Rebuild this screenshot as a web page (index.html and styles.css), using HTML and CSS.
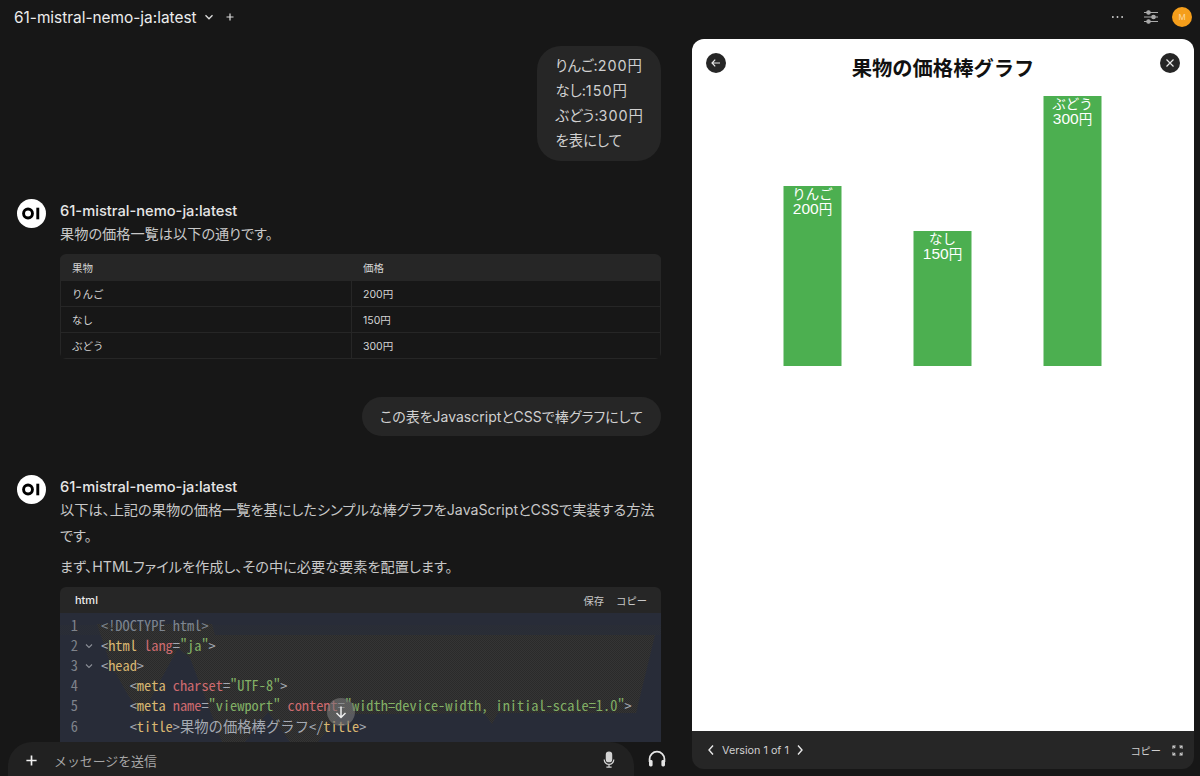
FILE: index.html
```html
<!DOCTYPE html>
<html lang="ja">
<head>
<meta charset="utf-8">
<title>61-mistral-nemo-ja:latest</title>
<link rel="stylesheet" href="styles.css">
</head>
<body>
<div class="app">
  <header class="topbar">
    <div class="model">
      <span class="model-name">61-mistral-nemo-ja:latest</span>
      <svg class="tb-chevron" viewBox="0 0 10 10"><path d="M1.500 3.200 5 6.800l3.500-3.600"/></svg>
      <svg class="tb-plus" viewBox="0 0 10 10"><path d="M5 1.500v7M1.500 5h7"/></svg>
    </div>
    <div class="tools">
      <svg class="tb-dots" viewBox="0 0 14 4"><circle cx="2" cy="2" r="1"/><circle cx="7" cy="2" r="1"/><circle cx="12" cy="2" r="1"/></svg>
      <svg class="tb-sliders" viewBox="0 0 16 14"><path d="M1 2.500h14M1 7h14M1 11.500h14"/><circle cx="5.500" cy="2.500" r="1.700"/><circle cx="10.500" cy="7" r="1.700"/><circle cx="5.500" cy="11.500" r="1.700"/></svg>
      <div class="user-avatar">M</div>
    </div>
  </header>
  <main class="main">
    <section class="chat">
      <div class="messages">
        <div class="user-row">
          <div class="bubble bubble-multi">
            <p>りんご:<span class="num">200</span>円</p>
            <p>なし:<span class="num">150</span>円</p>
            <p>ぶどう:<span class="num">300</span>円</p>
            <p>を表にして</p>
          </div>
        </div>
        <article class="reply reply-first">
          <svg class="logo" viewBox="0 0 30 30"><circle cx="15" cy="15" r="15" fill="#fff"/><circle cx="11.400" cy="15" r="4.600" fill="none" stroke="#000" stroke-width="3"/><rect x="20" y="9" width="3" height="12" fill="#000"/></svg>
          <div class="reply-body">
            <div class="name">61-mistral-nemo-ja:latest</div>
            <p class="text text-first">果物の価格一覧は以下の通りです。</p>
            <div class="table">
              <div class="tr th"><div class="td td-a">果物</div><div class="td td-b">価格</div></div>
              <div class="tr"><div class="td td-a">りんご</div><div class="td td-b">200円</div></div>
              <div class="tr"><div class="td td-a">なし</div><div class="td td-b">150円</div></div>
              <div class="tr"><div class="td td-a">ぶどう</div><div class="td td-b">300円</div></div>
            </div>
          </div>
        </article>
        <div class="user-row user-row-2">
          <div class="bubble bubble-single">この表をJavascriptとCSSで棒グラフにして</div>
        </div>
        <article class="reply reply-second">
          <svg class="logo" viewBox="0 0 30 30"><circle cx="15" cy="15" r="15" fill="#fff"/><circle cx="11.400" cy="15" r="4.600" fill="none" stroke="#000" stroke-width="3"/><rect x="20" y="9" width="3" height="12" fill="#000"/></svg>
          <div class="reply-body">
            <div class="name">61-mistral-nemo-ja:latest</div>
            <p class="text text-wrap">以下は、上記の果物の価格一覧を基にしたシンプルな棒グラフをJavaScriptとCSSで実装する方法です。</p>
            <p class="text text-p2">まず、HTMLファイルを作成し、その中に必要な要素を配置します。</p>
            <div class="code">
              <div class="code-head">
                <span class="lang">html</span>
                <span class="code-actions"><span>保存</span><span>コピー</span></span>
              </div>
              <div class="code-body">
                <svg class="dither" viewBox="0 0 601 129" width="601" height="129">
                  <defs>
                    <pattern id="dots" width="2" height="2" patternUnits="userSpaceOnUse">
                      <rect width="2" height="2" fill="#2a2a2a"/>
                      <rect width="1" height="1" fill="#353535" shape-rendering="crispEdges"/>
                      <rect x="1" y="1" width="1" height="1" fill="#353535" shape-rendering="crispEdges"/>
                    </pattern>
                  </defs>
                  <rect x="0" y="12" width="601" height="10" fill="url(#dots)" opacity=".2"/>
                  <polygon fill="url(#dots)" points="37,11 152,11 155,22 595,22 576,100 438,100 432,111 424,100 325,101 280,101 258,129 230,129 208,99 185,129 162,129 130,45 118,35 90,87 83,103 68,82 50,50"/>
                </svg>
                <div class="line"><span class="ln">1</span><span class="fold"></span><code class="src"><span class="dt">&lt;!DOCTYPE html&gt;</span></code></div>
                <div class="line"><span class="ln">2</span><span class="fold"><svg viewBox="0 0 8 6"><path d="M1 1.500 4 4.500l3-3"/></svg></span><code class="src"><span class="p">&lt;</span><span class="t">html</span> <span class="a">lang</span><span class="p">=</span><span class="s">"ja"</span><span class="p">&gt;</span></code></div>
                <div class="line"><span class="ln">3</span><span class="fold"><svg viewBox="0 0 8 6"><path d="M1 1.500 4 4.500l3-3"/></svg></span><code class="src"><span class="p">&lt;</span><span class="t">head</span><span class="p">&gt;</span></code></div>
                <div class="line"><span class="ln">4</span><span class="fold"></span><code class="src">    <span class="p">&lt;</span><span class="t">meta</span> <span class="a">charset</span><span class="p">=</span><span class="s">"UTF-8"</span><span class="p">&gt;</span></code></div>
                <div class="line"><span class="ln">5</span><span class="fold"></span><code class="src">    <span class="p">&lt;</span><span class="t">meta</span> <span class="a">name</span><span class="p">=</span><span class="s">"viewport"</span> <span class="a">content</span><span class="p">=</span><span class="s">"width=device-width, initial-scale=1.0"</span><span class="p">&gt;</span></code></div>
                <div class="line"><span class="ln">6</span><span class="fold"></span><code class="src">    <span class="p">&lt;</span><span class="t">title</span><span class="p">&gt;</span><span class="cjk">果物の価格棒グラフ</span><span class="p">&lt;/</span><span class="t">title</span><span class="p">&gt;</span></code></div>
              </div>
            </div>
          </div>
        </article>
        <button class="scroll-down" type="button" aria-label="scroll down">
          <svg viewBox="0 0 16 16"><path d="M8 2.500v11M3.500 9 8 13.500 12.500 9"/></svg>
        </button>
      </div>
      <div class="composer-row">
        <div class="composer">
          <svg class="c-plus" viewBox="0 0 14 14"><path d="M7 1.500v11M1.500 7h11"/></svg>
          <span class="placeholder">メッセージを送信</span>
          <svg class="c-mic" viewBox="0 0 16 20"><rect x="5" y="1" width="6" height="11" rx="3" fill="#d4d4d4"/><path d="M2.500 9.500a5.500 5.500 0 0 0 11 0M8 15v3M5 18.200h6"/></svg>
        </div>
        <svg class="c-head" viewBox="0 0 20 20"><path d="M2.600 13V10a7.400 7.400 0 0 1 14.800 0v3"/><rect x="2" y="11" width="3.600" height="6.500" rx="1.400" fill="#e5e5e5" stroke="none"/><rect x="14.400" y="11" width="3.600" height="6.500" rx="1.400" fill="#e5e5e5" stroke="none"/></svg>
      </div>
    </section>
    <aside class="artifact">
      <div class="canvas">
        <button class="round-btn round-back" type="button" aria-label="back">
          <svg viewBox="0 0 12 12"><path d="M10 6H2M5.200 2.600 2 6l3.200 3.400"/></svg>
        </button>
        <button class="round-btn round-close" type="button" aria-label="close">
          <svg viewBox="0 0 12 12"><path d="m2.500 2.500 7 7M9.500 2.500l-7 7"/></svg>
        </button>
        <h1 class="chart-title">果物の価格棒グラフ</h1>
        <div class="chart">
          <div class="bar bar-200"><span class="bar-line">りんご</span><span class="bar-line"><span class="bar-num">200</span>円</span></div>
          <div class="bar bar-150"><span class="bar-line">なし</span><span class="bar-line"><span class="bar-num">150</span>円</span></div>
          <div class="bar bar-300"><span class="bar-line">ぶどう</span><span class="bar-line"><span class="bar-num">300</span>円</span></div>
        </div>
      </div>
      <footer class="art-foot">
        <div class="version">
          <svg class="ver-chev" viewBox="0 0 8 12"><path d="M6 1.500 2 6l4 4.500"/></svg>
          <span>Version 1 of 1</span>
          <svg class="ver-chev" viewBox="0 0 8 12"><path d="M2 1.500 6 6l-4 4.500"/></svg>
        </div>
        <div class="art-actions">
          <span>コピー</span>
          <svg class="expand" viewBox="0 0 12 12"><path d="M1 4V1h3M8 1h3v3M11 8v3H8M4 11H1V8M1 1l2.500 2.500M11 1 8.500 3.500M11 11 8.500 8.500M1 11l2.500-2.500"/></svg>
        </div>
      </footer>
    </aside>
  </main>
</div>
</body>
</html>
```
FILE: styles.css
```css
* { box-sizing: border-box; }
html, body { margin: 0; height: 100%; }
body {
  background: #171717;
  color: #e3e3e3;
  font-family: Inter, "Noto Sans CJK JP", sans-serif;
  overflow: hidden;
}
p { margin: 0; }
svg { display: block; flex: none; }
button { border: 0; padding: 0; }

.app { display: flex; flex-direction: column; width: 1200px; height: 776px; }

/* top bar */
.topbar { height: 34px; flex: none; display: flex; justify-content: space-between; align-items: center; padding: 0 8px 0 14px; }
.model { display: flex; align-items: center; }
.model-name { font-size: 15.400px; color: #ececec; }
.tb-chevron { width: 10px; height: 10px; margin-left: 7px; fill: none; stroke: #ddd; stroke-width: 1.3; }
.tb-plus { width: 10px; height: 10px; margin-left: 11px; fill: none; stroke: #ddd; stroke-width: 1.2; }
.tools { display: flex; align-items: center; }
.tb-dots { width: 13px; height: 4px; fill: #d0d0d0; }
.tb-sliders { width: 16px; height: 14px; margin-left: 19px; fill: #aaa; stroke: #aaa; stroke-width: 1.2; }
.user-avatar { width: 20px; height: 20px; margin-left: 13px; border-radius: 50%; background: #f59e1b; color: #fcd9a0; font-size: 8px; display: flex; align-items: center; justify-content: center; }

/* layout */
.main { flex: 1; min-height: 0; display: flex; }
.chat { width: 692px; flex: none; display: flex; flex-direction: column; position: relative; }
.messages { flex: 1; min-height: 0; overflow: hidden; padding: 12px 31px 0 17px; }

/* user bubbles */
.user-row { display: flex; justify-content: flex-end; }
.user-row-2 { margin-top: 38px; }
.bubble { background: #262626; color: #d0d0d0; font-size: 14.400px; font-feature-settings: "palt"; }
.bubble-multi { padding: 7px 18px 8px; border-radius: 24px; line-height: 25px; }
.num { letter-spacing: 1px; }
.bubble-single { padding: 0 18px; height: 39px; line-height: 39px; border-radius: 20px; font-size: 14px; }

/* replies */
.reply { display: flex; gap: 14px; }
.reply-first { margin-top: 38px; }
.reply-second { margin-top: 39px; }
.logo { width: 29px; height: 29px; }
.reply-body { flex: 1; min-width: 0; }
.name { font-size: 14.700px; font-weight: 500; color: #e6e6e6; line-height: 24px; }
.text { font-size: 14.200px; line-height: 24px; color: #c8c8c8; font-feature-settings: "palt"; }
.text-first { margin-top: -1px; }
.text-wrap { line-height: 26px; margin-top: -2px; }
.text-p2 { margin-top: 6px; }

/* table */
.table { margin-top: 8px; border-radius: 6px; overflow: hidden; }
.tr { display: flex; height: 26px; border-bottom: 1px solid #262626; }
.th { height: 27px; background: #262626; border-bottom: 0; }
.td { font-size: 10.500px; color: #d4d4d4; display: flex; align-items: center; }
.td-a { width: 292px; border-left: 1px solid #262626; padding-left: 11px; border-right: 1px solid #262626; }
.td-b { flex: 1; padding-left: 11px; border-right: 1px solid #262626; }
.th .td { border-color: #262626; }

/* code */
.code { margin-top: 8px; border-radius: 6px 6px 0 0; overflow: hidden; }
.code-head { height: 26px; background: #262626; display: flex; align-items: center; justify-content: space-between; padding: 0 14px 0 15px; }
.lang { font-size: 11px; font-weight: 500; color: #ececec; }
.code-actions { display: flex; gap: 12px; font-size: 10.300px; color: #c8c8c8; }
.code-body { position: relative; background: #282c38; padding-top: 1px; height: 140px; }
.dither { position: absolute; left: 0; top: 0; }
.line { position: relative; display: flex; height: 20.200px; align-items: center; }
.ln { width: 18px; text-align: right; font-family: "Noto Sans Mono CJK JP", "Liberation Mono", monospace; font-size: 14.350px; color: #7f838b; }
.fold { width: 23px; padding-left: 7px; display: flex; align-items: center; height: 100%; padding-top: 4px; }
.fold svg { width: 8px; height: 6px; fill: none; stroke: #8a8e96; stroke-width: 1.1; }
.src { font-family: "Noto Sans Mono CJK JP", "Liberation Mono", monospace; font-size: 14.350px; white-space: pre; color: #abb2bf; }
.dt { color: #7d8590; }
.p { color: #a5aab3; }
.t { color: #d8b671; }
.a { color: #cd6a6f; }
.s { color: #82b065; }
.cjk { color: #a5aab3; }

.scroll-down { position: absolute; left: 327px; top: 664px; width: 28px; height: 28px; border-radius: 50%; background: rgba(120,120,120,.62); display: flex; align-items: center; justify-content: center; }
.scroll-down svg { width: 16px; height: 16px; fill: none; stroke: #eee; stroke-width: 1.5; }

/* composer */
.composer-row { height: 34px; flex: none; display: flex; align-items: center; padding-left: 8px; position: relative; }
.composer { width: 626px; height: 36px; align-self: flex-start; background: #212121; border-radius: 24px 24px 0 0; display: flex; align-items: center; padding: 0 18px 0 17px; }
.c-plus { width: 13px; height: 13px; fill: none; stroke: #f2f2f2; stroke-width: 1.8; }
.placeholder { font-size: 12.900px; color: #a6a6a6; margin-left: 16px; flex: 1; }
.c-mic { width: 14px; height: 18px; fill: none; stroke: #d4d4d4; stroke-width: 1.4; }
.c-head { width: 20px; height: 20px; margin-left: 13px; fill: none; stroke: #e5e5e5; stroke-width: 1.8; }

/* artifact */
.artifact { width: 502px; flex: none; margin: 5px 0 7px; border-radius: 12px; overflow: hidden; display: flex; flex-direction: column; background: #262626; }
.canvas { flex: 1; min-height: 0; background: #fff; color: #000; position: relative; overflow: hidden; display: flex; flex-direction: column; align-items: center; }
.chart-title { margin: 14px 0 0; font-size: 20.300px; line-height: 29px; font-weight: 700; color: #111; font-family: "Noto Sans CJK JP", sans-serif; }
.chart { margin-top: 14px; display: flex; align-items: flex-end; justify-content: center; gap: 72px; transform: translateX(-.5px); }
.bar { width: 58px; background: #4caf50; color: #fff; text-align: center; font-size: 13.500px; font-family: "Noto Sans CJK JP", sans-serif; overflow: hidden; }
.bar-line { display: block; height: 15px; line-height: 15px; }
.bar-num { font-family: "Liberation Sans", sans-serif; font-size: 15.500px; }
.bar-200 { height: 180px; }
.bar-150 { height: 135px; }
.bar-300 { height: 270px; }
.round-btn { position: absolute; top: 14px; width: 20px; height: 20px; border-radius: 50%; background: #262626; display: flex; align-items: center; justify-content: center; }
.round-btn svg { width: 12px; height: 12px; fill: none; stroke: #e8e8e8; stroke-width: 1.2; }
.round-back { left: 14px; }
.round-close { right: 14px; }
.art-foot { height: 38px; flex: none; display: flex; align-items: center; justify-content: space-between; padding: 0 11px 0 15px; font-size: 10.800px; color: #cfcfcf; }
.version { display: flex; align-items: center; gap: 7px; }
.ver-chev { width: 8px; height: 12px; fill: none; stroke: #e8e8e8; stroke-width: 1.4; }
.art-actions { display: flex; align-items: center; gap: 11px; font-size: 10.200px; }
.expand { width: 11px; height: 11px; fill: none; stroke: #d4d4d4; stroke-width: 1.1; }
```
